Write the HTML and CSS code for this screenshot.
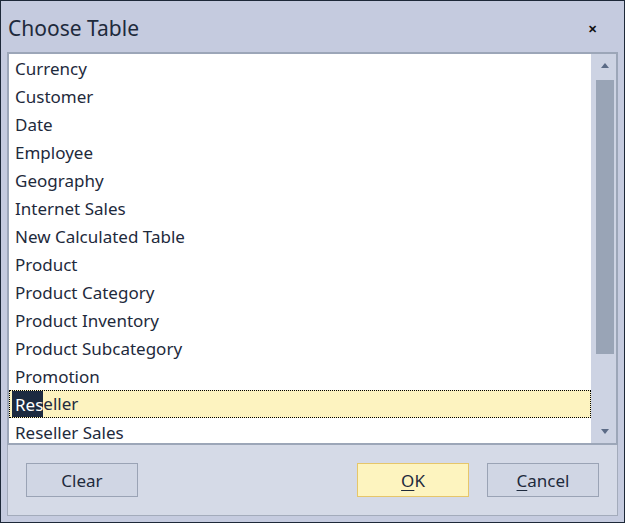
FILE: index.html
```html
<!DOCTYPE html>
<html lang="en">

<head>
    <meta charset="UTF-8">
    <title>Choose Table</title>
    <link rel="stylesheet" href="styles.css">
</head>

<body>
    <div class="dialog">
        <div class="title-bar">
            <h1 class="title">Choose Table</h1>
            <span class="close">&#x2715;</span>
        </div>

        <div class="list-box">
            <ul class="items">
                <li>Currency</li>
                <li>Customer</li>
                <li>Date</li>
                <li>Employee</li>
                <li>Geography</li>
                <li>Internet Sales</li>
                <li>New Calculated Table</li>
                <li>Product</li>
                <li>Product Category</li>
                <li>Product Inventory</li>
                <li>Product Subcategory</li>
                <li>Promotion</li>
                <li class="selected"><span class="typed">Res</span>eller</li>
                <li>Reseller Sales</li>
            </ul>
            <div class="scrollbar">
                <span class="arrow up"></span>
                <div class="thumb"></div>
                <span class="arrow down"></span>
            </div>
        </div>

        <div class="button-panel">
            <button class="btn">Clear</button>
            <div class="right-buttons">
                <button class="btn btn-default"><u>O</u>K</button>
                <button class="btn"><u>C</u>ancel</button>
            </div>
        </div>
    </div>
</body>

</html>
```

FILE: styles.css
```css
:root {
    --frame: #1d2838;
    --chrome: #c5cbdf;
    --panel: #d5dae7;
    --line: #9ca6b8;
    --text: #1e2a3c;
}

* {
    box-sizing: border-box;
}

body {
    margin: 0;
    font-family: 'Segoe UI', 'Noto Sans', 'Open Sans', sans-serif;
    color: var(--text);
}

.dialog {
    width: 625px;
    height: 523px;
    border: 1px solid var(--frame);
    background-color: var(--chrome);
    padding: 0 6px;
}

.title-bar {
    height: 51px;
    display: flex;
    align-items: center;
    justify-content: space-between;
    padding: 2px 0 0 1px;
}

.title {
    margin: 0;
    font-size: 21px;
    font-weight: normal;
}

.close {
    font-size: 11px;
    font-weight: bold;
    color: #111;
    margin-right: 21px;
    margin-top: 1px;
}

/* list */
.list-box {
    height: 393px;
    border: 2px solid var(--line);
    display: flex;
    overflow: hidden;
}

.items {
    flex: 1;
    list-style: none;
    margin: 0;
    padding: 0;
    background-color: #fff;
}

.items li {
    height: 28px;
    line-height: 28px;
    padding: 1px 0 0 6px;
    font-size: 17px;
    white-space: nowrap;
    overflow: hidden;
}

.items li.selected {
    background-color: #fdf3c0;
    outline: 1px dotted #000;
    outline-offset: -1px;
    padding: 0 0 0 3px;
}

.typed {
    display: inline-block;
    background-color: #1c2a40;
    color: #fff;
    padding: 1px 0 0 3px;
    height: 26px;
    margin-top: 1px;
    line-height: 26px;
    vertical-align: top;
}

.scrollbar {
    width: 25px;
    background-color: #cdd3e3;
    display: flex;
    flex-direction: column;
    align-items: center;
    padding: 9px 0 9px 2px;
}

.arrow {
    width: 0;
    height: 0;
    border-left: 4px solid transparent;
    border-right: 4px solid transparent;
}

.arrow.up {
    border-bottom: 5px solid #5b6b86;
}

.arrow.down {
    border-top: 5px solid #5b6b86;
    margin-top: auto;
}

.thumb {
    width: 18px;
    height: 274px;
    margin-top: 12px;
    background-color: #99a4b6;
}

/* bottom buttons */
.button-panel {
    height: 71px;
    background-color: var(--panel);
    border: 1px solid #a3abbb;
    border-top: none;
    display: flex;
    justify-content: space-between;
    padding: 18px 18px 0 18px;
}

.right-buttons {
    display: flex;
    gap: 18px;
}

.btn {
    width: 112px;
    height: 34px;
    background-color: #d0d6e4;
    border: 1px solid #9aa3b5;
    font-family: inherit;
    font-size: 17px;
    color: var(--text);
    padding: 0;
}

.btn-default {
    background-color: #fdf4bf;
    border-color: #e6c66a;
}

.btn u {
    text-underline-offset: 3px;
}
```
